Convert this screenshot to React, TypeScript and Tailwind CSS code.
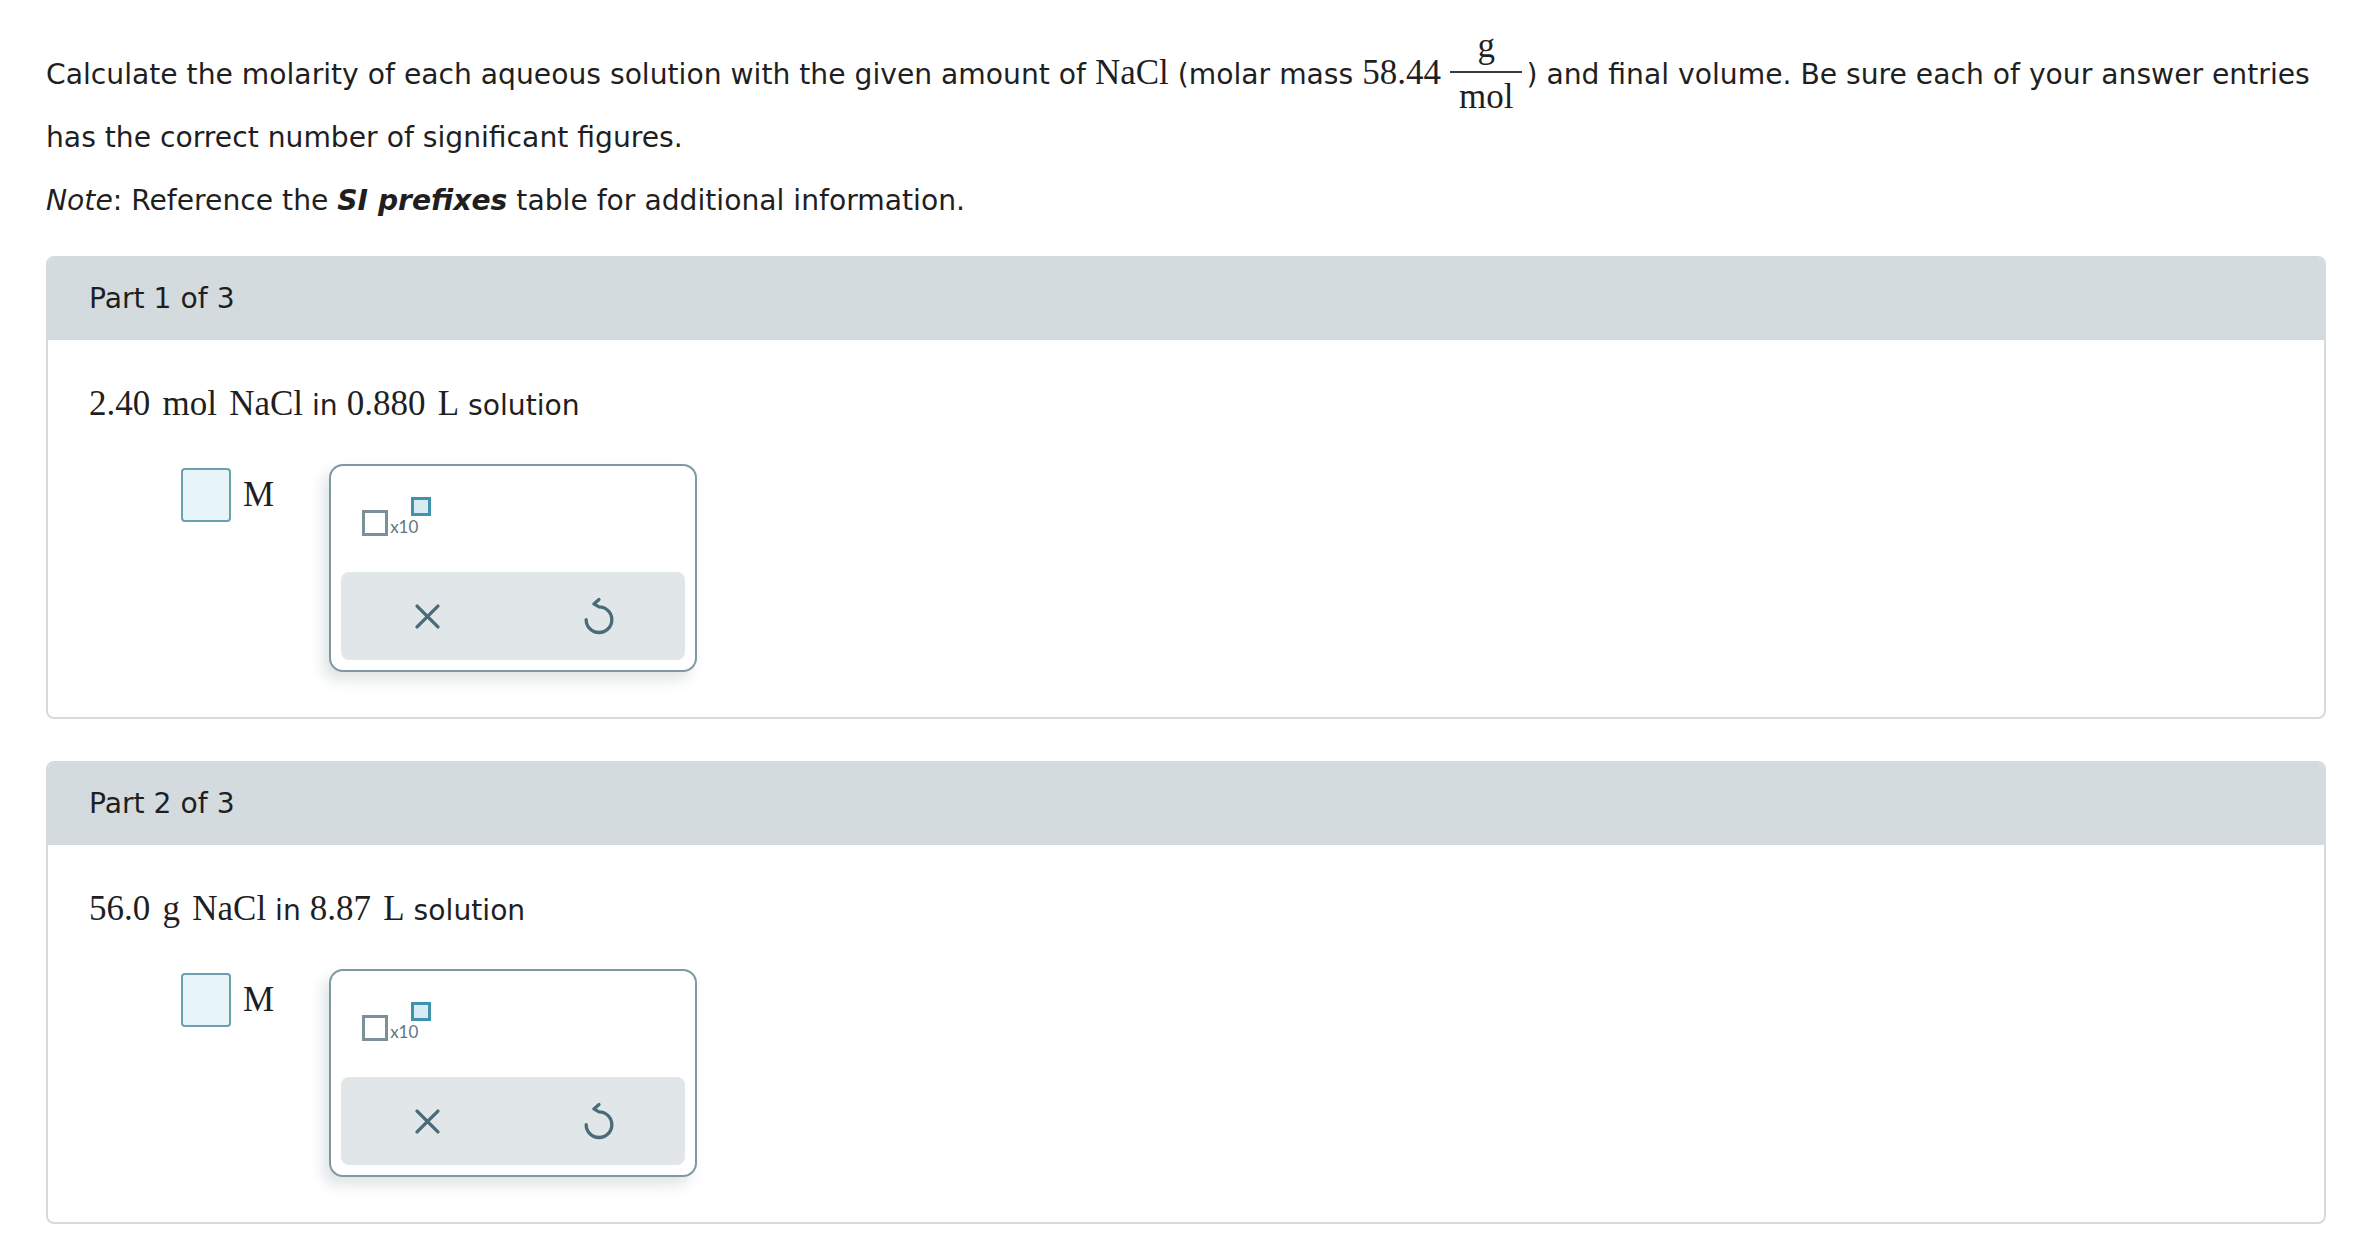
import React from 'react';

const sans = "font-['DejaVu_Sans',Verdana,sans-serif]";
const serif = "font-['Liberation_Serif','Times_New_Roman',serif] text-[35px]";

const Mth: React.FC<{ children: React.ReactNode }> = ({ children }) => (
  <span className={`${serif} leading-none [word-spacing:3.5px]`}>{children}</span>
);

const Fraction: React.FC<{ top: string; bottom: string }> = ({ top, bottom }) => (
  <span className={`inline-flex flex-col items-stretch align-[27px] my-[-18px] ml-[9px] mr-[4px] ${serif}`}>
    <span className="leading-[34px] pb-[8px] px-[9px] text-center">{top}</span>
    <span className="h-[2px] bg-[#3a3a3a]" />
    <span className="leading-[34px] pt-[7px] px-[9px] text-center">{bottom}</span>
  </span>
);

const XIcon = () => (
  <svg width="25" height="25" viewBox="0 0 24 24" fill="none" stroke="#4a6b78" strokeWidth="3.2" strokeLinecap="round">
    <path d="M2 2 L22 22 M22 2 L2 22" />
  </svg>
);

const UndoIcon = () => (
  <svg width="44" height="44" viewBox="0 0 24 24" fill="none" stroke="#4a6b78" strokeWidth="1.8" strokeLinecap="round" strokeLinejoin="round">
    <path d="M12 3 L9.2 5.4 L12 7 A7 7 0 1 1 5 14" />
  </svg>
);

const AnswerPanel = () => (
  <div className="ml-[55px] w-[368px] h-[208px] flex flex-col rounded-[14px] border-2 border-[#7f98a1] bg-white p-[10px] shadow-[-6px_8px_14px_rgba(60,85,95,0.16)]">
    <div className="flex-1 pl-[21px] pt-[21px]">
      <div className="flex items-start">
        <span className="mt-[13px] w-[26px] h-[26px] border-[3px] border-[#7b9199]" />
        <span className="self-end ml-[2px] mb-[1px] text-[17px] leading-[17px] text-[#5d7782] font-['Lato','Open_Sans',sans-serif]">x10</span>
        <span className="ml-[-7px] w-[20px] h-[19px] border-[3px] border-[#3f93ac] bg-[#d7ecf2]" />
      </div>
    </div>
    <div className="h-[88px] flex rounded-[8px] bg-[#e1e6e9]">
      <div className="flex-1 flex items-center justify-center">
        <XIcon />
      </div>
      <div className="flex-1 flex items-center justify-center">
        <UndoIcon />
      </div>
    </div>
  </div>
);

const PartCard: React.FC<{ label: string; children: React.ReactNode }> = ({ label, children }) => (
  <div className="rounded-[8px] border-2 border-[#d4dbdf] bg-white overflow-hidden">
    <div className="h-[82px] flex items-center pl-[41px] bg-[#d4dbdf] text-[28.2px]">{label}</div>
    <div className="pl-[41px] pt-[46px] pb-[45px]">
      <div className="leading-[40px] text-[28.2px]">{children}</div>
      <div className="mt-[38px] pl-[92px] flex items-start">
        <span className="mt-[4px] w-[50px] h-[54px] rounded-[4px] border-2 border-[#6aa1af] bg-[#e7f4f8]" />
        <span className={`mt-[4px] ml-[12px] leading-[54px] ${serif}`}>M</span>
        <AnswerPanel />
      </div>
    </div>
  </div>
);

export default function App() {
  return (
    <div className={`min-h-screen bg-white text-[#1f1f1f] pl-[46px] pr-[30px] pt-[43px] ${sans}`}>
      <p className="text-[28.2px] leading-[63px] whitespace-nowrap">
        Calculate the molarity of each aqueous solution with the given amount of <Mth>NaCl</Mth> (molar mass <Mth>58.44</Mth>
        <Fraction top="g" bottom="mol" />) and final volume. Be sure each of your answer entries
        <br />
        has the correct number of significant figures.
      </p>
      <p className="text-[28.2px] leading-[63px]">
        <i>Note</i>: Reference the <b><i>SI prefixes</i></b> table for additional information.
      </p>
      <div className="mt-[24px] flex flex-col gap-[42px]">
        <PartCard label="Part 1 of 3">
          <Mth>2.40 mol NaCl</Mth> in <Mth>0.880 L</Mth> solution
        </PartCard>
        <PartCard label="Part 2 of 3">
          <Mth>56.0 g NaCl</Mth> in <Mth>8.87 L</Mth> solution
        </PartCard>
      </div>
    </div>
  );
}
